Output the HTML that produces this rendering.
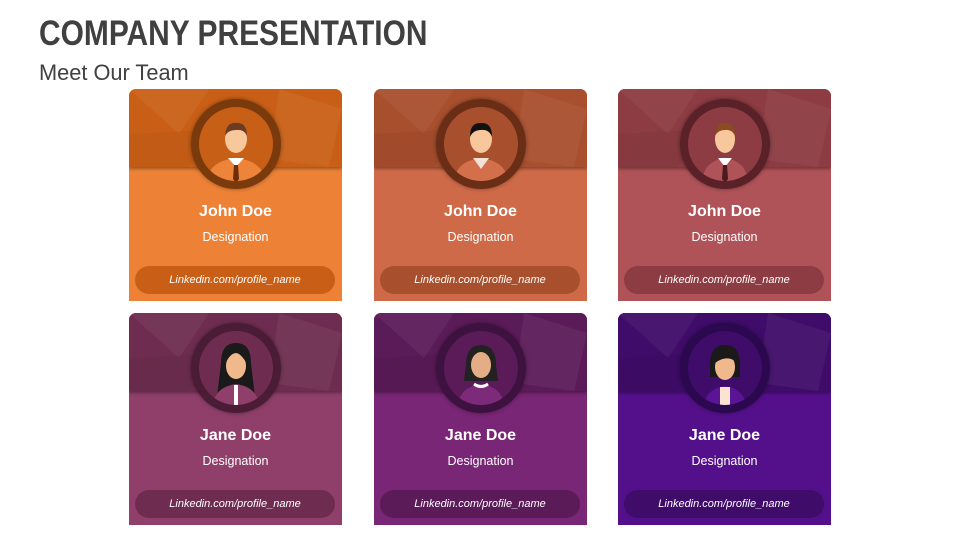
<!DOCTYPE html>
<html><head><meta charset="utf-8"><style>
*{margin:0;padding:0;box-sizing:border-box}
body{width:960px;height:540px;background:#fff;font-family:"Liberation Sans",sans-serif;position:relative;overflow:hidden}
h1{position:absolute;left:39px;top:14px;font-size:35px;font-weight:bold;color:#404040;transform:scaleX(0.855);transform-origin:left top;white-space:nowrap}
h2{position:absolute;left:39px;top:60px;font-size:22px;font-weight:normal;color:#404040;transform:scaleX(0.99);transform-origin:left top}
.card{position:absolute;width:213px;height:212px;border-radius:7px 7px 0 0;overflow:hidden}
.hd{position:absolute;left:0;top:0;width:213px;height:78px;box-shadow:0 2px 3px rgba(0,0,0,.35)}
.hd svg{position:absolute;left:0;top:0}
.ring{position:absolute;left:62px;top:10px;width:90px;height:90px;border-radius:50%;box-shadow:0 0 4px rgba(0,0,0,.4);overflow:hidden}
.in{position:absolute;left:8px;top:8px;width:74px;height:74px;border-radius:50%;overflow:hidden}
.nm{position:absolute;top:114px;width:100%;text-align:center;color:#fff;font-weight:bold;font-size:16px}
.ds{position:absolute;top:141px;width:100%;text-align:center;color:#fff;font-size:12.5px}
.pl{position:absolute;left:6px;top:177px;width:200px;height:28px;border-radius:14px;color:#fff;font-style:italic;font-size:11px;text-align:center;line-height:28px}
</style></head><body>
<h1>COMPANY PRESENTATION</h1>
<h2>Meet Our Team</h2>

<div class="card" style="left:129px;top:89px;background:#ED8236">
<div class="hd" style="background:#C95F16"><svg width="213" height="78"><polygon points="0,0 80,0 50,45" fill="#fff" opacity=".05"/><polygon points="0,45 90,40 60,78 0,78" fill="#000" opacity=".04"/><polygon points="150,0 213,20 200,78 140,70" fill="#fff" opacity=".05"/></svg></div>
<div class="ring" style="background:#7A3A0C"><div class="in" style="background:#C85F17"><svg width="74" height="74"><path d="M8 74 Q10 54 37 51 Q64 54 66 74Z" fill="#EE843A"/><path d="M29 51 L37 60 L45 51 Z" fill="#fff"/><path d="M35 58 L39 58 L40 72 L37 76 L34 72Z" fill="#6B2E0A"/><ellipse cx="37" cy="32" rx="11" ry="14" fill="#F8C79B"/><path d="M26 29 Q27 15 37 16 Q48 15 48 29 Q45 22 37 23 Q29 23 26 29Z" fill="#6B3B22"/></svg></div></div>
<div class="nm">John Doe</div><div class="ds">Designation</div>
<div class="pl" style="background:#C95F16">Linkedin.com/profile_name</div></div>

<div class="card" style="left:374px;top:89px;background:#CF6A48">
<div class="hd" style="background:#A84F2E"><svg width="213" height="78"><polygon points="0,0 80,0 50,45" fill="#fff" opacity=".05"/><polygon points="0,45 90,40 60,78 0,78" fill="#000" opacity=".04"/><polygon points="150,0 213,20 200,78 140,70" fill="#fff" opacity=".05"/></svg></div>
<div class="ring" style="background:#6A2E16"><div class="in" style="background:#A84F2E"><svg width="74" height="74"><path d="M10 74 Q12 54 37 51 Q62 54 64 74Z" fill="#D46F4C"/><path d="M29 51 L37 62 L45 51 Z" fill="#F3E2D6"/><ellipse cx="37" cy="32" rx="11" ry="14" fill="#F8C79B"/><path d="M26 30 Q26 15 37 16 Q48 15 48 30 Q45 22 37 23 Q29 23 26 30Z" fill="#111"/></svg></div></div>
<div class="nm">John Doe</div><div class="ds">Designation</div>
<div class="pl" style="background:#A84F2E">Linkedin.com/profile_name</div></div>

<div class="card" style="left:618px;top:89px;background:#B05358">
<div class="hd" style="background:#8C3C42"><svg width="213" height="78"><polygon points="0,0 80,0 50,45" fill="#fff" opacity=".05"/><polygon points="0,45 90,40 60,78 0,78" fill="#000" opacity=".04"/><polygon points="150,0 213,20 200,78 140,70" fill="#fff" opacity=".05"/></svg></div>
<div class="ring" style="background:#5A2228"><div class="in" style="background:#8C3C42"><svg width="74" height="74"><path d="M14 74 Q16 54 37 51 Q58 54 60 74Z" fill="#B05358"/><path d="M30 51 L37 60 L44 51 Z" fill="#fff"/><path d="M35 58 L39 58 L40 72 L37 76 L34 72Z" fill="#4A1A1E"/><ellipse cx="37" cy="32" rx="10" ry="14" fill="#F8C79B"/><path d="M27 29 Q28 15 37 16 Q47 15 47 29 Q44 22 37 23 Q30 23 27 29Z" fill="#8A4A22"/></svg></div></div>
<div class="nm">John Doe</div><div class="ds">Designation</div>
<div class="pl" style="background:#8C3C42">Linkedin.com/profile_name</div></div>

<div class="card" style="left:129px;top:313px;background:#8F3F6A">
<div class="hd" style="background:#6E2D50"><svg width="213" height="78"><polygon points="0,0 80,0 50,45" fill="#fff" opacity=".05"/><polygon points="0,45 90,40 60,78 0,78" fill="#000" opacity=".04"/><polygon points="150,0 213,20 200,78 140,70" fill="#fff" opacity=".05"/></svg></div>
<div class="ring" style="background:#4A1C36"><div class="in" style="background:#6E2D50"><svg width="74" height="74"><path d="M22 32 Q22 12 37 12 Q52 12 52 32 L56 66 L18 66Z" fill="#1a1a1a"/><path d="M14 74 Q16 56 37 53 Q58 56 60 74Z" fill="#8F3F6A"/><rect x="35" y="54" width="4" height="20" fill="#fff"/><ellipse cx="37" cy="35" rx="10" ry="13" fill="#F0B98C"/><path d="M27 31 Q29 18 37 18 Q45 18 47 31 Q41 22 37 22 Q32 22 27 31Z" fill="#1a1a1a"/></svg></div></div>
<div class="nm">Jane Doe</div><div class="ds">Designation</div>
<div class="pl" style="background:#6E2D50">Linkedin.com/profile_name</div></div>

<div class="card" style="left:374px;top:313px;background:#782675">
<div class="hd" style="background:#5B1B58"><svg width="213" height="78"><polygon points="0,0 80,0 50,45" fill="#fff" opacity=".05"/><polygon points="0,45 90,40 60,78 0,78" fill="#000" opacity=".04"/><polygon points="150,0 213,20 200,78 140,70" fill="#fff" opacity=".05"/></svg></div>
<div class="ring" style="background:#3E1240"><div class="in" style="background:#5B1B58"><svg width="74" height="74"><path d="M22 34 Q22 14 37 14 Q52 14 52 34 L54 50 L20 50Z" fill="#222"/><path d="M14 74 Q16 56 37 53 Q58 56 60 74Z" fill="#7E2A7A"/><ellipse cx="37" cy="34" rx="10" ry="13" fill="#E3AE85"/><path d="M30 53 Q37 58 44 53" stroke="#fff" stroke-width="3" fill="none"/></svg></div></div>
<div class="nm">Jane Doe</div><div class="ds">Designation</div>
<div class="pl" style="background:#5B1B58">Linkedin.com/profile_name</div></div>

<div class="card" style="left:618px;top:313px;background:#54108A">
<div class="hd" style="background:#3F0C69"><svg width="213" height="78"><polygon points="0,0 80,0 50,45" fill="#fff" opacity=".05"/><polygon points="0,45 90,40 60,78 0,78" fill="#000" opacity=".04"/><polygon points="150,0 213,20 200,78 140,70" fill="#fff" opacity=".05"/></svg></div>
<div class="ring" style="background:#2C0850"><div class="in" style="background:#3F0C69"><svg width="74" height="74"><path d="M22 34 Q22 14 37 14 Q52 14 52 34 L52 46 L22 46Z" fill="#1a1a1a"/><path d="M16 74 Q18 58 37 55 Q56 58 58 74Z" fill="#5A1496"/><rect x="32" y="56" width="10" height="18" fill="#FBE3D2"/><ellipse cx="37" cy="36" rx="10" ry="13" fill="#F0B98C"/><path d="M27 32 Q29 20 40 20 Q47 22 47 30 Q38 24 27 32Z" fill="#1a1a1a"/></svg></div></div>
<div class="nm">Jane Doe</div><div class="ds">Designation</div>
<div class="pl" style="background:#3F0C69">Linkedin.com/profile_name</div></div>
</body></html>
